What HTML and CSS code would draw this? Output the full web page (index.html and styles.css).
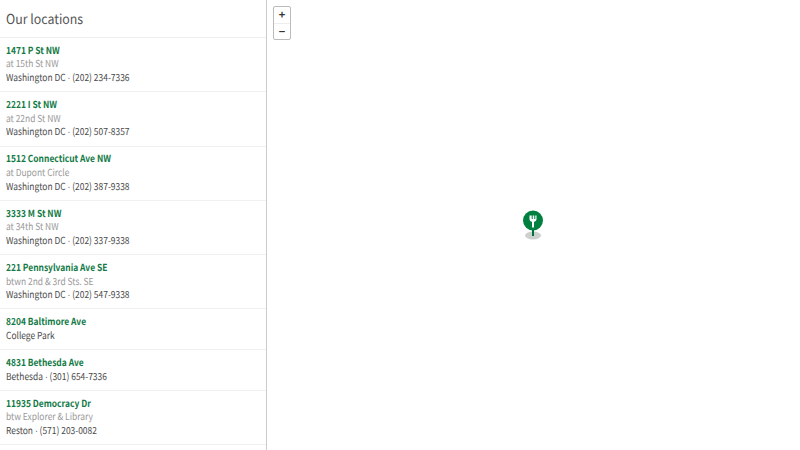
FILE: index.html
```html
<!DOCTYPE html>
<html lang="en">
<head>
<meta charset="utf-8">
<title>Our locations</title>
<link rel="stylesheet" href="styles.css">
</head>
<body>
<div class="page">
  <aside class="sidebar">
    <h1 class="heading"><span class="heading-text">Our locations</span></h1>
    <ul class="list">
      <li class="loc"><a class="name">1471 P St NW</a><span class="cross">at 15th St NW</span><span class="info">Washington DC <span class="dot">·</span> (202) 234-7336</span></li>
      <li class="loc"><a class="name">2221 I St NW</a><span class="cross">at 22nd St NW</span><span class="info">Washington DC <span class="dot">·</span> (202) 507-8357</span></li>
      <li class="loc"><a class="name">1512 Connecticut Ave NW</a><span class="cross">at Dupont Circle</span><span class="info">Washington DC <span class="dot">·</span> (202) 387-9338</span></li>
      <li class="loc"><a class="name">3333 M St NW</a><span class="cross">at 34th St NW</span><span class="info">Washington DC <span class="dot">·</span> (202) 337-9338</span></li>
      <li class="loc"><a class="name">221 Pennsylvania Ave SE</a><span class="cross">btwn 2nd &amp; 3rd Sts. SE</span><span class="info">Washington DC <span class="dot">·</span> (202) 547-9338</span></li>
      <li class="loc"><a class="name">8204 Baltimore Ave</a><span class="info">College Park</span></li>
      <li class="loc"><a class="name">4831 Bethesda Ave</a><span class="info">Bethesda <span class="dot">·</span> (301) 654-7336</span></li>
      <li class="loc"><a class="name">11935 Democracy Dr</a><span class="cross">btw Explorer &amp; Library</span><span class="info">Reston <span class="dot">·</span> (571) 203-0082</span></li>
    </ul>
  </aside>
  <main class="map">
    <div class="zoom">
      <button class="zoom-btn zoom-in">+</button>
      <button class="zoom-btn">−</button>
    </div>
    <svg class="pin" width="24" height="32" viewBox="0 0 24 32" aria-hidden="true">
      <ellipse cx="12" cy="25.500" rx="8" ry="4" fill="#ccd1ce"/>
      <rect x="11" y="16" width="2" height="10" fill="#00703c"/>
      <circle cx="12" cy="10.500" r="10" fill="#00803f"/>
      <path d="M8.500 5.500v3.500c0 1.500 .9 2.500 2.500 2.800V17.500h2V11.800c1.600-.3 2.500-1.300 2.500-2.800V5.500h-1.200V9h-1V5.500h-1.600V9h-1V5.500z" fill="#fff"/>
    </svg>
  </main>
</div>
</body>
</html>
```
FILE: styles.css
```css
* { box-sizing: border-box; }
html, body { margin: 0; height: 100%; overflow: hidden; background: #fff; }
body { font-family: "Noto Sans CJK SC", "Noto Sans", sans-serif; font-size: 9.7px; line-height: 13.6px; color: #444; text-rendering: geometricPrecision; }
.page { display: flex; height: 450px; }
.sidebar { width: 267px; flex: none; border-right: 1px solid #ccc; overflow: hidden; }
.heading { margin: 0; height: 38px; padding: 0 6px; font-size: 13.6px; line-height: 37px; font-weight: 400; color: #555; border-bottom: 1px solid #eee; }
.heading-text { display: inline-block; transform: scaleX(.91); transform-origin: 0 50%; }
.list { list-style: none; margin: 0; padding: 0; }
.loc { display: flex; flex-direction: column; align-items: flex-start; padding: 5.9px 6px 6.63px; border-bottom: 1px solid #f0f0f0; }
.name, .cross, .info { transform: scaleX(.87); transform-origin: 0 50%; white-space: nowrap; }
.name { font-weight: 700; color: #137a46; }
.cross { color: #999; }
.info { color: #4a4a4a; }
.dot { font-family: "Liberation Sans", sans-serif; line-height: 0; }
.map { position: relative; flex: 1; }
.zoom { position: absolute; left: 6px; top: 6px; width: 18px; height: 34px; display: flex; flex-direction: column; border: 1px solid #bbb; border-radius: 2px; background: #fff; }
.zoom-btn { flex: 1; padding: 0; border: 0; background: none; font: 700 11px/1 "Noto Sans CJK SC", sans-serif; color: #333; }
.zoom-in { border-bottom: 1px solid #eee; }
.pin { position: absolute; left: 254px; top: 210px; }
```
